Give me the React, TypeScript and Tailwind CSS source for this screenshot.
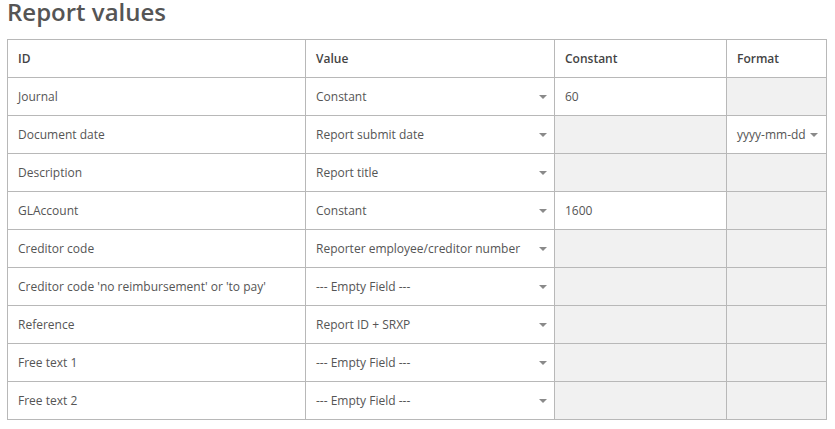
import React from "react";

type Row = {
  id: string;
  value: string;
  constant: string | null;
  format: string | null;
};

const rows: Row[] = [
  { id: "Journal", value: "Constant", constant: "60", format: null },
  { id: "Document date", value: "Report submit date", constant: null, format: "yyyy-mm-dd" },
  { id: "Description", value: "Report title", constant: null, format: null },
  { id: "GLAccount", value: "Constant", constant: "1600", format: null },
  { id: "Creditor code", value: "Reporter employee/creditor number", constant: null, format: null },
  { id: "Creditor code 'no reimbursement' or 'to pay'", value: "--- Empty Field ---", constant: null, format: null },
  { id: "Reference", value: "Report ID + SRXP", constant: null, format: null },
  { id: "Free text 1", value: "--- Empty Field ---", constant: null, format: null },
  { id: "Free text 2", value: "--- Empty Field ---", constant: null, format: null },
];

function Caret() {
  return (
    <span className="inline-block w-0 h-0 border-l-[4px] border-r-[4px] border-t-[4px] border-l-transparent border-r-transparent border-t-[#8a8a8a]" />
  );
}

const cell = "h-[38px] border-r border-b border-[#b8b8b8] flex items-center";

export default function App() {
  return (
    <div
      className="bg-white w-[835px] h-[429px] pl-[7px] text-[#555]"
      style={{ fontFamily: '"Open Sans", "Liberation Sans", sans-serif' }}
    >
      <h1 className="text-[24px] leading-[24px] font-semibold text-[#555]">Report values</h1>
      <div className="mt-[15px] w-[820px] border-l border-t border-[#b8b8b8] grid grid-cols-[298px_249px_172px_100px] text-[12px]">
        <div className={`${cell} pl-[10px] font-semibold text-[#444]`}>ID</div>
        <div className={`${cell} pl-[10px] font-semibold text-[#444]`}>Value</div>
        <div className={`${cell} pl-[10px] font-semibold text-[#444]`}>Constant</div>
        <div className={`${cell} pl-[10px] font-semibold text-[#444]`}>Format</div>
        {rows.map((r) => (
          <React.Fragment key={r.id}>
            <div className={`${cell} pl-[10px]`}>{r.id}</div>
            <div className={`${cell} pl-[10px] pr-[7px] justify-between`}>
              <span>{r.value}</span>
              <Caret />
            </div>
            {r.constant !== null ? (
              <div className={`${cell} pl-[10px]`}>{r.constant}</div>
            ) : (
              <div className={`${cell} bg-[#f1f1f1]`} />
            )}
            {r.format !== null ? (
              <div className={`${cell} pl-[10px] pr-[8px] justify-between`}>
                <span>{r.format}</span>
                <Caret />
              </div>
            ) : (
              <div className={`${cell} bg-[#f1f1f1]`} />
            )}
          </React.Fragment>
        ))}
      </div>
    </div>
  );
}
